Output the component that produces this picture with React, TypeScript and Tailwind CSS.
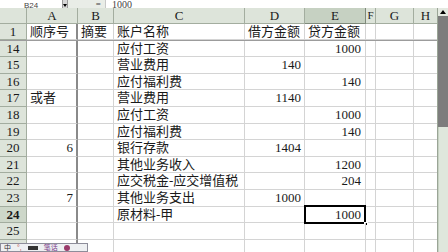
import React from "react";

type Row = {
  n: number;
  a?: string;
  b?: string;
  c?: string;
  d?: string;
  e?: string;
};

const ROWS: Row[] = [
  { n: 1, a: "顺序号", b: "摘要", c: "账户名称", d: "借方金额", e: "贷方金额" },
  { n: 14, c: "应付工资", e: "1000" },
  { n: 15, c: "营业费用", d: "140" },
  { n: 16, c: "应付福利费", e: "140" },
  { n: 17, a: "或者", c: "营业费用", d: "1140" },
  { n: 18, c: "应付工资", e: "1000" },
  { n: 19, c: "应付福利费", e: "140" },
  { n: 20, a: "6", c: "银行存款", d: "1404" },
  { n: 21, c: "其他业务收入", e: "1200" },
  { n: 22, c: "应交税金-应交增值税", e: "204" },
  { n: 23, a: "7", c: "其他业务支出", d: "1000" },
  { n: 24, c: "原材料-甲", e: "1000" },
  { n: 25 },
  { n: 26 },
];

const isNum = (s?: string) => !!s && /^\d+$/.test(s);

function Cell({ w, text }: { w: string; text?: string }) {
  return (
    <div
      className={`${w} shrink-0 h-full border-b border-r border-[#d4d4d4] overflow-visible whitespace-nowrap leading-[16px] ${
        isNum(text) ? "text-right pr-[3px]" : "pl-[3px]"
      }`}
    >
      {text}
    </div>
  );
}

export default function App() {
  return (
    <div
      className="relative w-[448px] h-[252px] overflow-hidden bg-white text-[13px] text-[#1a1a1a]"
      style={{ fontFamily: '"Liberation Serif", "Noto Sans CJK SC", serif' }}
    >
      {/* formula bar, mostly scrolled out of view */}
      <div className="flex h-[8px] overflow-hidden text-[10px] leading-[10px] text-[#444]">
        <div className="w-[62px] bg-white flex justify-center items-end">
          <span className="text-[8px] leading-[8px] -mb-[2px]" style={{ fontFamily: '"Liberation Sans", sans-serif' }}>
            B24
          </span>
        </div>
        <div className="w-[6px] bg-[#d6d6d6] flex items-end justify-center border-x border-[#9a9a9a]">
          <div className="w-0 h-0 border-x-[2px] border-x-transparent border-t-[3px] border-t-black mb-[1px]" />
        </div>
        <div className="w-[37px] bg-[#e9ede7] flex items-end justify-end pr-[4px]">
          <span className="font-bold text-[9px] leading-[8px]">=</span>
        </div>
        <div className="flex-1 bg-white border-l border-[#c8c8c8] flex items-end pl-[6px]">
          <span className="text-[10px] leading-[8px] -mb-[1px]">1000</span>
        </div>
      </div>

      <div className="flex">
        <div className="w-[437px]">
          {/* column headers */}
          <div className="flex h-[16px] bg-[#dde4da] leading-[15px] text-center text-[13px]">
            <div className="w-[27px] border-r border-b border-[#a3ad9f]" />
            <div className="w-[51px] border-r border-b border-[#a3ad9f]">A</div>
            <div className="w-[36px] border-r border-b border-[#a3ad9f]">B</div>
            <div className="w-[131px] border-r border-b border-[#a3ad9f]">C</div>
            <div className="w-[60px] border-r border-b border-[#a3ad9f]">D</div>
            <div className="w-[61px] border-r border-b border-[#7f8a7b] bg-[#c6d1c2]">E</div>
            <div className="w-[10px] border-r border-b border-[#a3ad9f] text-[11px]">F</div>
            <div className="w-[38px] border-r border-b border-[#a3ad9f]">G</div>
            <div className="w-[23px] border-b border-[#a3ad9f]">H</div>
          </div>

          {ROWS.map((r) => {
            const sel = r.n === 24;
            return (
              <div
                key={r.n}
                className={`flex h-[16.6px] ${r.n === 1 ? "border-b border-[#9c9c9c]" : ""}`}
              >
                <div
                  className={`w-[27px] shrink-0 h-full border-r border-b border-[#a3ad9f] text-center leading-[16px] ${
                    sel ? "bg-[#cdd7c9] font-bold" : "bg-[#dde4da]"
                  }`}
                >
                  {r.n}
                </div>
                <div
                  className={`w-[51px] shrink-0 h-full border-b border-[#d4d4d4] border-r-2 border-r-[#8a8a8a] leading-[16px] whitespace-nowrap ${
                    isNum(r.a) ? "text-right pr-[3px]" : "pl-[3px]"
                  }`}
                >
                  {r.a}
                </div>
                <Cell w="w-[36px]" text={r.b} />
                <Cell w="w-[131px]" text={r.c} />
                <Cell w="w-[60px]" text={r.d} />
                <div
                  className={`relative w-[61px] shrink-0 h-full border-b border-r border-[#d4d4d4] leading-[16px] whitespace-nowrap ${
                    isNum(r.e) ? "text-right pr-[4px]" : "pl-[3px]"
                  }`}
                >
                  {r.e}
                  {sel && (
                    <>
                      <div className="absolute -left-[1px] -top-[2px] -right-[1px] -bottom-[2px] border-2 border-black" />
                      <div className="absolute -right-[3px] -bottom-[4px] w-[4px] h-[4px] bg-black border border-white" />
                    </>
                  )}
                </div>
                <Cell w="w-[10px]" />
                <Cell w="w-[38px]" />
                <div className="w-[23px] shrink-0 h-full border-b border-[#d4d4d4]" />
              </div>
            );
          })}
        </div>

        {/* vertical scrollbar */}
        <div className="w-[11px] h-[244px] flex flex-col border-l border-[#9aa596]">
          <div className="h-[9px] bg-[#e4e9e1] flex items-center justify-center border-b border-[#7c7c7c]">
            <div className="w-0 h-0 border-x-[3px] border-x-transparent border-b-[4px] border-b-black" />
          </div>
          <div className="h-[110px] bg-[#7d7d7d]" />
          <div className="flex-1 bg-[#dfe7dc] border-l border-[#c7d2c3]" />
        </div>
      </div>

      {/* IME status bar overlay */}
      <div
        className="absolute left-0 bottom-0 h-[9px] w-[88px] flex items-center gap-[6px] px-[3px] bg-[#eef0f2] border border-[#8d8d9a] text-[7px] leading-none text-[#333] overflow-hidden"
        style={{ fontFamily: '"Noto Sans CJK SC", sans-serif' }}
      >
        <span className="shrink-0 leading-none">中</span>
        <span className="shrink-0 leading-none text-[#c04040]" style={{ fontFamily: '"Liberation Sans", sans-serif' }}>
          °,
        </span>
        <span className="shrink-0 w-[10px] h-[4px] bg-[#333]" />
        <span className="shrink-0 leading-none text-[#7a3a8a]">笔话</span>
        <span className="shrink-0 w-[6px] h-[6px] rounded-full bg-[#9a3a6a]" />
      </div>
    </div>
  );
}
